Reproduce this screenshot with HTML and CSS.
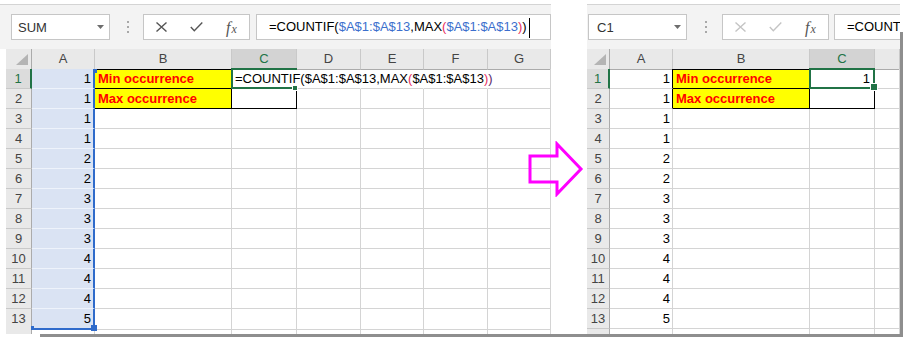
FILE: index.html
```html
<!DOCTYPE html>
<html lang="en">
<head>
    <meta charset="UTF-8">
    <title>COUNTIF min occurrence</title>
    <link rel="stylesheet" href="styles.css">
</head>
<body>
<div class="stage">
    <div class="panels">

        <!-- before: editing the formula -->
        <section class="sheet left">
            <div class="toolbar">
                <div class="namebox"><span>SUM</span><svg class="drop" width="7" height="4" viewBox="0 0 7 4"><polygon points="0,0 7,0 3.5,4"/></svg></div>
                <div class="grip"><i></i><i></i><i></i></div>
                <div class="btns">
                    <span class="btn"><svg width="11" height="10" viewBox="0 0 11 10"><path d="M0.5 0.5 L10.5 9.5 M10.5 0.5 L0.5 9.5"/></svg></span>
                    <span class="btn"><svg width="13" height="10" viewBox="0 0 13 10"><path d="M0.8 5 L4.3 8.8 L12.3 0.6"/></svg></span>
                    <span class="btn fx"><i>f</i><i class="x">x</i></span>
                </div>
                <div class="fbar">=COUNTIF(<span class="rf">$A$1:$A$13</span>,MAX<span class="pr">(</span><span class="rf">$A$1:$A$13</span><span class="pr">)</span>)<span class="caret"></span></div>
            </div>
            <div class="grid">
                <div class="row">
                    <div class="corner"><svg width="26" height="19" viewBox="0 0 26 19"><polygon points="22,5 22,16 10,16"/></svg></div>
                    <div class="h">A</div><div class="h">B</div><div class="h on">C</div><div class="h">D</div><div class="h">E</div><div class="h">F</div><div class="h">G</div>
                </div>
                <div class="row">
                    <div class="rh on">1</div><div class="c num ref first">1</div><div class="c lbl top">Min occurrence</div>
                    <div class="c edit">=COUNTIF($A$1:$A$13,MAX<span class="pr">(</span>$A$1:$A$13<span class="pr">)</span><span class="pp">)</span></div>
                    <div class="c ov"></div><div class="c ov"></div><div class="c ov"></div><div class="c"></div>
                </div>
                <div class="row">
                    <div class="rh">2</div><div class="c num ref">1</div><div class="c lbl">Max occurrence</div><div class="c box"></div>
                    <div class="c"></div><div class="c"></div><div class="c"></div><div class="c"></div>
                </div>
                <div class="row"><div class="rh">3</div><div class="c num ref">1</div><div class="c"></div><div class="c"></div><div class="c"></div><div class="c"></div><div class="c"></div><div class="c"></div></div>
                <div class="row"><div class="rh">4</div><div class="c num ref">1</div><div class="c"></div><div class="c"></div><div class="c"></div><div class="c"></div><div class="c"></div><div class="c"></div></div>
                <div class="row"><div class="rh">5</div><div class="c num ref">2</div><div class="c"></div><div class="c"></div><div class="c"></div><div class="c"></div><div class="c"></div><div class="c"></div></div>
                <div class="row"><div class="rh">6</div><div class="c num ref">2</div><div class="c"></div><div class="c"></div><div class="c"></div><div class="c"></div><div class="c"></div><div class="c"></div></div>
                <div class="row"><div class="rh">7</div><div class="c num ref">3</div><div class="c"></div><div class="c"></div><div class="c"></div><div class="c"></div><div class="c"></div><div class="c"></div></div>
                <div class="row"><div class="rh">8</div><div class="c num ref">3</div><div class="c"></div><div class="c"></div><div class="c"></div><div class="c"></div><div class="c"></div><div class="c"></div></div>
                <div class="row"><div class="rh">9</div><div class="c num ref">3</div><div class="c"></div><div class="c"></div><div class="c"></div><div class="c"></div><div class="c"></div><div class="c"></div></div>
                <div class="row"><div class="rh">10</div><div class="c num ref">4</div><div class="c"></div><div class="c"></div><div class="c"></div><div class="c"></div><div class="c"></div><div class="c"></div></div>
                <div class="row"><div class="rh">11</div><div class="c num ref">4</div><div class="c"></div><div class="c"></div><div class="c"></div><div class="c"></div><div class="c"></div><div class="c"></div></div>
                <div class="row"><div class="rh">12</div><div class="c num ref">4</div><div class="c"></div><div class="c"></div><div class="c"></div><div class="c"></div><div class="c"></div><div class="c"></div></div>
                <div class="row"><div class="rh">13</div><div class="c num ref last">5</div><div class="c"></div><div class="c"></div><div class="c"></div><div class="c"></div><div class="c"></div><div class="c"></div></div>
                <div class="row stub"><div class="rh"></div><div class="c"></div><div class="c"></div><div class="c"></div><div class="c"></div><div class="c"></div><div class="c"></div><div class="c"></div></div>
            </div>
        </section>

        <div class="gap"></div>

        <!-- after: result in C1 -->
        <section class="sheet right">
            <div class="toolbar">
                <div class="namebox"><span>C1</span><svg class="drop" width="7" height="4" viewBox="0 0 7 4"><polygon points="0,0 7,0 3.5,4"/></svg></div>
                <div class="grip"><i></i><i></i><i></i></div>
                <div class="btns off">
                    <span class="btn"><svg width="11" height="10" viewBox="0 0 11 10"><path d="M0.5 0.5 L10.5 9.5 M10.5 0.5 L0.5 9.5"/></svg></span>
                    <span class="btn"><svg width="13" height="10" viewBox="0 0 13 10"><path d="M0.8 5 L4.3 8.8 L12.3 0.6"/></svg></span>
                    <span class="btn fx"><i>f</i><i class="x">x</i></span>
                </div>
                <div class="fbar">=COUNTIF($A$1:$A$13,MAX($A$1:$A$13))</div>
            </div>
            <div class="grid">
                <div class="row">
                    <div class="corner"><svg width="23" height="19" viewBox="0 0 23 19"><polygon points="19,5 19,16 7,16"/></svg></div>
                    <div class="h">A</div><div class="h">B</div><div class="h on">C</div><div class="h"></div>
                </div>
                <div class="row"><div class="rh on">1</div><div class="c num kb">1</div><div class="c lbl top">Min occurrence</div><div class="c num sel top">1</div><div class="c"></div></div>
                <div class="row"><div class="rh">2</div><div class="c num kb">1</div><div class="c lbl">Max occurrence</div><div class="c box"></div><div class="c"></div></div>
                <div class="row"><div class="rh">3</div><div class="c num">1</div><div class="c"></div><div class="c"></div><div class="c"></div></div>
                <div class="row"><div class="rh">4</div><div class="c num">1</div><div class="c"></div><div class="c"></div><div class="c"></div></div>
                <div class="row"><div class="rh">5</div><div class="c num">2</div><div class="c"></div><div class="c"></div><div class="c"></div></div>
                <div class="row"><div class="rh">6</div><div class="c num">2</div><div class="c"></div><div class="c"></div><div class="c"></div></div>
                <div class="row"><div class="rh">7</div><div class="c num">3</div><div class="c"></div><div class="c"></div><div class="c"></div></div>
                <div class="row"><div class="rh">8</div><div class="c num">3</div><div class="c"></div><div class="c"></div><div class="c"></div></div>
                <div class="row"><div class="rh">9</div><div class="c num">3</div><div class="c"></div><div class="c"></div><div class="c"></div></div>
                <div class="row"><div class="rh">10</div><div class="c num">4</div><div class="c"></div><div class="c"></div><div class="c"></div></div>
                <div class="row"><div class="rh">11</div><div class="c num">4</div><div class="c"></div><div class="c"></div><div class="c"></div></div>
                <div class="row"><div class="rh">12</div><div class="c num">4</div><div class="c"></div><div class="c"></div><div class="c"></div></div>
                <div class="row"><div class="rh">13</div><div class="c num">5</div><div class="c"></div><div class="c"></div><div class="c"></div></div>
                <div class="row stub"><div class="rh"></div><div class="c"></div><div class="c"></div><div class="c"></div><div class="c"></div></div>
            </div>
        </section>

        <div class="edge"></div>
    </div>
    <div class="floor"></div>

    <svg class="arrow" width="58" height="56" viewBox="0 0 58 56">
        <polygon points="3,15 30,15 30,3 54,28 30,53 30,41 3,41"/>
    </svg>
</div>
</body>
</html>
```

FILE: styles.css
```css
*{
    box-sizing: border-box;
}

body{
    margin: 0;
    background-color: #fff;
    font-family: "Liberation Sans", Arial, sans-serif;
    font-size: 13px;
    color: #000;
}

.stage{
    position: relative;
    width: 903px;
    height: 337px;
    overflow: hidden;
}

.panels{
    display: flex;
    height: 334px;
}

.sheet{
    display: flex;
    flex-direction: column;
    overflow: hidden;
}

.left{
    width: 551px;
}

.gap{
    width: 36px;
}

.right{
    width: 313px;
}

.edge{
    width: 3px;
    margin-top: 32px;
    background-color: #8e8e8e;
}

.floor{
    height: 3px;
    margin-left: 40px;
    background-color: #8e8e8e;
}

/* formula bar */

.toolbar{
    display: flex;
    align-items: flex-start;
    height: 45px;
    margin-top: 4px;
    padding: 9px 0 0 11px;
    border-top: 1px solid #d4d4d4;
    background-color: #f3f3f3;
}

.right .toolbar{
    padding-left: 1px;
}

.namebox{
    width: 99px;
    height: 26px;
    display: flex;
    align-items: center;
    justify-content: space-between;
    padding: 0 5px 0 6px;
    border: 1px solid #c6c6c6;
    background-color: #fff;
    color: #333;
}

.right .namebox{
    padding-left: 8px;
}

.drop{
    fill: #6d6d6d;
}

.grip{
    width: 33px;
    height: 26px;
    display: flex;
    flex-direction: column;
    align-items: center;
    justify-content: center;
    gap: 3px;
    padding-left: 3px;
}

.right .grip{
    width: 35px;
}

.grip i{
    width: 2px;
    height: 2px;
    background-color: #a8a8a8;
}

.btns{
    width: 107px;
    height: 26px;
    display: flex;
    border: 1px solid #c6c6c6;
    background-color: #fff;
}

.btn{
    width: 35px;
    display: flex;
    align-items: center;
    justify-content: center;
}

.btn svg path{
    fill: none;
    stroke: #555;
    stroke-width: 1.4;
}

.off .btn svg path{
    stroke: #c4c4c4;
}

.fx{
    font-family: "Liberation Serif", "DejaVu Serif", serif;
    color: #555;
    padding-top: 1px;
}

.fx i{
    font-size: 16px;
}

.fx .x{
    font-size: 12px;
    margin-left: 1px;
    position: relative;
    top: 2px;
}

.fbar{
    flex: 1;
    height: 26px;
    margin-left: 6px;
    padding-left: 12px;
    border: 1px solid #c6c6c6;
    background-color: #fff;
    line-height: 24px;
    white-space: nowrap;
    overflow: hidden;
}

.right .fbar{
    margin-left: 5px;
    border-right: none;
}

.rf{
    color: #3c6fcd;
}

.pr{
    color: #e8305f;
}

.pp{
    color: #5a2a6a;
}

.caret{
    display: inline-block;
    width: 1px;
    height: 20px;
    margin-left: 2px;
    vertical-align: middle;
    background-color: #000;
}

/* cells */

.left .grid{
    padding-left: 6px;
}

.row{
    display: grid;
    height: 20px;
}

.left .row{
    grid-template-columns: 26px 63px 137px 65px 64px 63px 64px 63px;
}

.right .row{
    grid-template-columns: 23px 63px 137px 65px 25px;
}

.row.stub{
    height: 5px;
    overflow: hidden;
}

.row.stub > *{
    border-bottom: none;
}

.corner, .h, .rh{
    background-color: #e9e9e9;
    text-align: center;
    line-height: 19px;
    color: #444;
}

.corner{
    border-right: 1px solid #ababab;
    border-bottom: 1px solid #ababab;
}

.corner svg{
    display: block;
    fill: #b4b4b4;
}

.h{
    border-right: 1px solid #c9c9c9;
    border-bottom: 1px solid #ababab;
}

.h.on{
    background-color: #d3d3d3;
    border-bottom: 2px solid #217346;
    color: #217346;
}

.rh{
    border-right: 1px solid #ababab;
    border-bottom: 1px solid #c9c9c9;
}

.rh.on{
    background-color: #dcdcdc;
    border-right: 2px solid #217346;
    color: #217346;
}

.c{
    padding: 0 3px;
    border-right: 1px solid #d4d4d4;
    border-bottom: 1px solid #d4d4d4;
    line-height: 19px;
    white-space: nowrap;
    overflow: hidden;
}

.num{
    text-align: right;
    padding-right: 2px;
}

.lbl{
    background-color: #ff0;
    color: #f00;
    font-weight: 700;
    border-right-color: #000;
    border-bottom-color: #000;
}

.top{
    box-shadow: inset 0 1px 0 #000;
}

.box{
    border-right-color: #000;
    border-bottom-color: #000;
}

.kb{
    border-right-color: #000;
}

.ov{
    border-right-color: transparent;
}

/* range picked up by the formula */

.ref{
    background-color: #dae3f3;
    border-right: 2px solid #2f6bcb;
    border-bottom-color: #eef3fb;
}

.ref.last{
    border-bottom: 2px solid #2f6bcb;
}

.ref.first, .ref.last{
    position: relative;
    overflow: visible;
    z-index: 1;
}

.ref.first::after{
    content: "";
    position: absolute;
    right: -4px;
    top: 0;
    width: 4px;
    height: 4px;
    background-color: #2f6bcb;
}

.ref.last::before{
    content: "";
    position: absolute;
    left: -1px;
    bottom: -2px;
    width: 3px;
    height: 4px;
    background-color: #2f6bcb;
}

.ref.last::after{
    content: "";
    position: absolute;
    right: -4px;
    bottom: -3px;
    width: 6px;
    height: 6px;
    background-color: #2f6bcb;
}

/* active cell */

.edit, .sel{
    position: relative;
    overflow: visible;
    z-index: 2;
}

.edit{
    border-right-color: transparent;
}

.edit::after, .sel::after{
    content: "";
    position: absolute;
    top: -1px;
    left: -1px;
    right: -1px;
    bottom: -1px;
    border: 2px solid #217346;
}

.edit::after{
    border-right: none;
}

.edit::before, .sel::before{
    content: "";
    position: absolute;
    right: -3px;
    bottom: -2px;
    width: 6px;
    height: 6px;
    background-color: #217346;
    outline: 1px solid #fff;
    z-index: 1;
}

.edit::before{
    right: -1px;
    width: 4px;
    height: 4px;
}

.sel{
    padding-right: 4px;
}

/* pointer between the two shots */

.arrow{
    position: absolute;
    left: 527px;
    top: 141px;
}

.arrow polygon{
    fill: none;
    stroke: #ff00ff;
    stroke-width: 3;
}
```
